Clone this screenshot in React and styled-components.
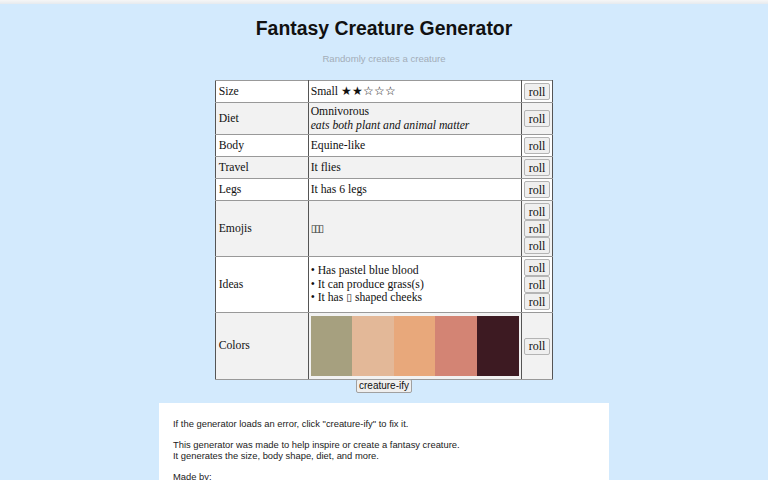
import React from "react";
import styled, { createGlobalStyle } from "styled-components";

const Global = createGlobalStyle`
  html, body { margin: 0; padding: 0; }
  body {
    background: #d3eafd;
    font-family: "Liberation Sans", Arial, sans-serif;
    color: #111;
  }
`;

const TopStrip = styled.div`
  height: 4px;
  background: linear-gradient(#f6f6f6, #e6eaee);
`;

const Page = styled.main`
  display: flex;
  flex-direction: column;
  align-items: center;
`;

const Title = styled.h1`
  margin: 13px 0 0;
  font-size: 19.4px;
  line-height: 22px;
  font-weight: bold;
  color: #111;
`;

const Subtitle = styled.p`
  margin: 14px 0 16px;
  font-size: 9.6px;
  line-height: 11px;
  color: #a3adb8;
`;

const Table = styled.table`
  border-collapse: collapse;
  border: 1px solid #444;
  font-family: "Liberation Serif", "Times New Roman", serif;
  font-size: 11.7px;
  line-height: 13.5px;
  color: #111;
`;

const Row = styled.tr`
  background: ${(p) => (p.$alt ? "#f2f2f2" : "#ffffff")};
`;

const Cell = styled.td`
  border-left: 1px solid #555;
  border-right: 1px solid #555;
  border-top: 1px solid #999;
  border-bottom: 1px solid #999;
  padding: ${(p) => p.$pad || "2px"};
  width: ${(p) => p.$w}px;
  vertical-align: middle;
  text-align: left;
`;

const RollCell = styled(Cell)`
  padding: 2px 2px;
`;

const RollButton = styled.button`
  display: block;
  box-sizing: border-box;
  height: 17px;
  margin: 0 auto;
  padding: 0 4px;
  font-family: "Liberation Serif", "Times New Roman", serif;
  font-size: 12px;
  line-height: 14px;
  color: #111;
  background: #efefef;
  border: 1px solid #b4b4b4;
  border-radius: 2px;
`;

const Note = styled.em`
  display: block;
`;

const Missing = styled.span`
  font-family: "DejaVu Sans", sans-serif;
  font-size: 10.5px;
  letter-spacing: -2px;
  margin-right: 2px;
  color: #333;
`;

const Swatches = styled.div`
  display: flex;
  height: 60px;
  margin: 1px 0;
`;

const Swatch = styled.div`
  flex: 1;
  background: ${(p) => p.$c};
`;

const IfyButton = styled.button`
  box-sizing: border-box;
  height: 14px;
  margin-top: -1px;
  padding: 0 2px;
  font-family: "Liberation Sans", Arial, sans-serif;
  font-size: 10px;
  line-height: 12px;
  color: #111;
  background: #efefef;
  border: 1px solid #a0a0a0;
  border-radius: 2px;
`;

const Panel = styled.section`
  box-sizing: border-box;
  width: 450px;
  margin-top: 10px;
  padding: 5px 14px 10px;
  background: #ffffff;
  font-size: 9.4px;
  line-height: 11px;
  color: #222;
`;

const Para = styled.p`
  margin: 10px 0;
`;

const rows = [
  { label: "Size", content: "Small ★★☆☆☆", rolls: 1 },
  {
    label: "Diet",
    content: (
      <>
        Omnivorous
        <Note>eats both plant and animal matter</Note>
      </>
    ),
    rolls: 1,
  },
  { label: "Body", content: "Equine-like", rolls: 1 },
  { label: "Travel", content: "It flies", rolls: 1 },
  { label: "Legs", content: "It has 6 legs", rolls: 1 },
  { label: "Emojis", content: <Missing>▯▯▯</Missing>, rolls: 3 },
  {
    label: "Ideas",
    content: (
      <>
        • Has pastel blue blood
        <br />• It can produce grass(s)
        <br />• It has <Missing>▯</Missing> shaped cheeks
      </>
    ),
    rolls: 3,
  },
  {
    label: "Colors",
    content: (
      <Swatches>
        {["#a6a07f", "#e3b898", "#e8a87b", "#d38474", "#3d1a22"].map((c) => (
          <Swatch key={c} $c={c} />
        ))}
      </Swatches>
    ),
    rolls: 1,
  },
];

export default function App() {
  return (
    <>
      <Global />
      <TopStrip />
      <Page>
        <Title>Fantasy Creature Generator</Title>
        <Subtitle>Randomly creates a creature</Subtitle>
        <Table>
          <tbody>
            {rows.map((r, i) => (
              <Row key={r.label} $alt={i % 2 === 1}>
                <Cell $w={86} $pad="2px 3px">{r.label}</Cell>
                <Cell $w={208}>{r.content}</Cell>
                <RollCell $w={26}>
                  {Array.from({ length: r.rolls }).map((_, k) => (
                    <RollButton key={k}>roll</RollButton>
                  ))}
                </RollCell>
              </Row>
            ))}
          </tbody>
        </Table>
        <IfyButton>creature-ify</IfyButton>
        <Panel>
          <Para>If the generator loads an error, click "creature-ify" to fix it.</Para>
          <Para>
            This generator was made to help inspire or create a fantasy creature.
            <br />
            It generates the size, body shape, diet, and more.
          </Para>
          <Para>Made by:</Para>
        </Panel>
      </Page>
    </>
  );
}
